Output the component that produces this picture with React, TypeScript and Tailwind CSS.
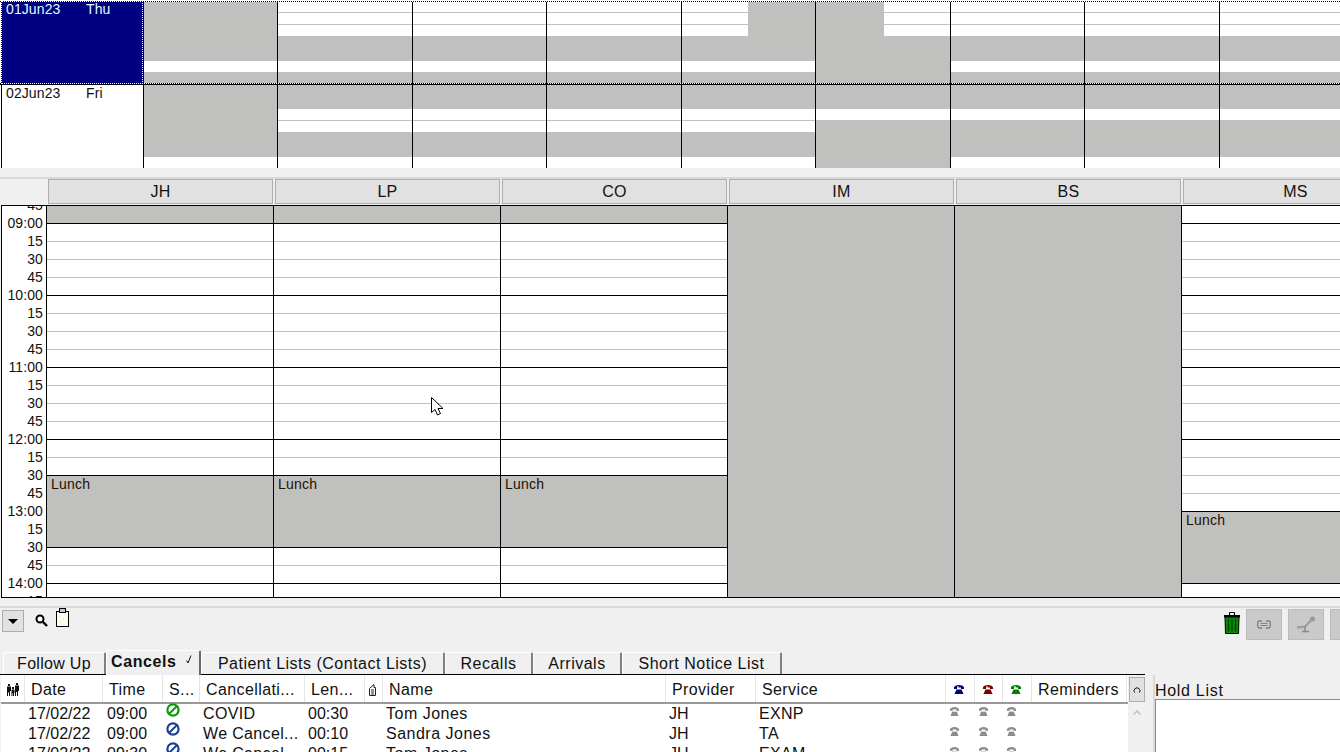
import React from 'react';

const GRAY = 'bg-[#c0c0be]';
const dayGrid =
  'grid grid-cols-[143px_134px_135px_134px_135px_134px_135px_134px_135px_121px]';

// top overview strip, one band = height + kind
type Band = [number, 'w' | 'l' | 'g'];

const openTop: Band[] = [
  [11, 'l'],
  [12, 'l'],
  [11, 'w'],
];

const Bands = ({ bands, className = '' }: { bands: Band[]; className?: string }) => (
  <div className={`flex flex-col ${className}`}>
    {bands.map(([h, kind], i) => (
      <div
        key={i}
        style={{ height: h }}
        className={kind === 'g' ? GRAY : kind === 'l' ? 'bg-white border-b border-[#c0c0c0]' : 'bg-white'}
      />
    ))}
  </div>
);

const DayCell = ({ bands, children }: { bands?: Band[]; children?: React.ReactNode }) => (
  <div className="border-l border-black overflow-hidden">
    {children}
    {bands && <Bands bands={bands} />}
  </div>
);

const thuAfter: Band[] = [
  [25, 'g'],
  [11, 'w'],
  [11, 'g'],
];

const ThuRow = () => (
  <div className={`${dayGrid} h-[83px] border-y border-dotted border-black`}>
    <div className="ml-px bg-[#000080] border border-dotted border-white text-[#dff] text-[14px] leading-[15px] tracking-[0.1px] flex pl-1 -mt-px h-[83px]">
      <span className="w-20">01Jun23</span>
      <span>Thu</span>
    </div>
    <DayCell bands={[[59, 'g'], [11, 'w'], [11, 'g']]} />
    <DayCell bands={[...openTop, ...thuAfter]} />
    <DayCell bands={[...openTop, ...thuAfter]} />
    <DayCell bands={[...openTop, ...thuAfter]} />
    <DayCell>
      <div className="flex">
        <Bands bands={openTop} className="flex-1" />
        <div className={`w-[67px] ${GRAY}`} />
      </div>
      <Bands bands={thuAfter} />
    </DayCell>
    <DayCell>
      <div className="flex">
        <div className={`w-[68px] ${GRAY}`} />
        <Bands bands={openTop} className="flex-1" />
      </div>
      <Bands bands={[[47, 'g']]} />
    </DayCell>
    <DayCell bands={[...openTop, ...thuAfter]} />
    <DayCell bands={[...openTop, ...thuAfter]} />
    <DayCell bands={[...openTop, ...thuAfter]} />
  </div>
);

const friOpen: Band[] = [
  [24, 'g'],
  [12, 'l'],
  [11, 'w'],
  [25, 'g'],
  [11, 'w'],
];
const friHalf: Band[] = [
  [24, 'g'],
  [11, 'w'],
  [37, 'g'],
  [11, 'w'],
];

const FriRow = () => (
  <div className={`${dayGrid} h-[84px] border-t border-black`}>
    <div className="ml-px border-l border-black bg-white text-[#111] text-[14px] leading-4 tracking-[0.1px] flex pl-1 h-[83px]">
      <span className="w-20">02Jun23</span>
      <span>Fri</span>
    </div>
    <DayCell bands={[[72, 'g'], [11, 'w']]} />
    <DayCell bands={friOpen} />
    <DayCell bands={friOpen} />
    <DayCell bands={friOpen} />
    <DayCell bands={friOpen} />
    <DayCell bands={[[24, 'g'], [11, 'w'], [48, 'g']]} />
    <DayCell bands={friHalf} />
    <DayCell bands={friHalf} />
    <DayCell bands={friHalf} />
  </div>
);

// main day grid
const timeLabels = [
  '45', '09:00', '15', '30', '45', '10:00', '15', '30', '45', '11:00', '15', '30', '45',
  '12:00', '15', '30', '45', '13:00', '15', '30', '45', '14:00', '15',
];

const ROW = 18;

const Provider = ({
  lunchFrom,
  lunchSlots,
  firstClosed,
  last,
}: {
  lunchFrom: number;
  lunchSlots: number;
  firstClosed?: boolean;
  last?: boolean;
}) => {
  const rows: React.ReactNode[] = [];
  let i = 0;
  while (i < 22) {
    if (i === lunchFrom) {
      rows.push(
        <div
          key={i}
          style={{ height: ROW * lunchSlots }}
          className={`${GRAY} border-b border-black pl-1 text-[14px] leading-4 tracking-[0.2px] text-[#210]`}
        >
          Lunch
        </div>
      );
      i += lunchSlots;
      continue;
    }
    const hard = i % 4 === 0 || i === lunchFrom - 1;
    rows.push(
      <div
        key={i}
        className={`h-[18px] border-b ${hard ? 'border-black' : 'border-[#c0c0c0]'} ${
          firstClosed && i === 0 ? GRAY : 'bg-white'
        }`}
      />
    );
    i += 1;
  }
  return <div className={`${last ? 'flex-1' : 'w-[227px] border-r border-black'} overflow-hidden`}>{rows}</div>;
};

const Closed = () => <div className={`w-[227px] border-r border-black ${GRAY}`} />;

const ColHead = ({ label }: { label: string }) => (
  <div className="w-[225px] shrink-0 h-[25px] bg-[#e1e1e1] border border-[#adadad] flex items-center justify-center text-[16px] tracking-[0.3px] text-[#111]">
    {label}
  </div>
);

// icons
const SearchIcon = () => (
  <svg width="13" height="13" viewBox="0 0 13 13" className="mt-[5px] ml-[11px]">
    <circle cx="5" cy="5" r="3.500" fill="#fff" stroke="#000" strokeWidth="2" />
    <path d="M8 8l4 4" stroke="#000" strokeWidth="2.400" />
  </svg>
);

const ClipboardIcon = () => (
  <svg width="14" height="19" viewBox="0 0 14 19" className="ml-[8px] -mt-px">
    <rect x="0.500" y="3.500" width="12" height="15" fill="#fffff0" stroke="#000" />
    <rect x="3.500" y="0.500" width="6" height="4" fill="#c8c8c8" stroke="#000" />
    <path d="M3 8h1M7 11h1M4 14h1M9 7h1M10 14h1" stroke="#d8d8a0" />
  </svg>
);

const TrashIcon = () => (
  <svg width="17" height="22" viewBox="0 0 17 22">
    <path d="M5.500 3V.5h5V3" fill="none" stroke="#000" />
    <rect x="0" y="3" width="16" height="2.500" fill="#000" />
    <path d="M1 5h14l-.5 16.500h-13z" fill="#078a07" stroke="#000" />
    <path d="M4.500 7.500v12M8 7.500v12M11.500 7.500v12" stroke="#013a01" strokeWidth="1.200" />
  </svg>
);

const LinkIcon = () => (
  <svg width="14" height="9" viewBox="0 0 14 9">
    <path d="M5 1H2.500Q.5 1 .5 4.500T2.500 8H5M9 1h2.500q2 0 2 3.500T11.500 8H9" fill="none" stroke="#808080" strokeWidth="1.300" />
    <path d="M3.500 3.500h7M3.500 5.500h7" stroke="#808080" />
  </svg>
);

const ChairIcon = () => (
  <svg width="20" height="17" viewBox="0 0 20 17">
    <path d="M1 11.500l8-1 6-6" fill="none" stroke="#9a9a9a" strokeWidth="2" />
    <circle cx="16.500" cy="3" r="2.500" fill="#9a9a9a" />
    <path d="M9 11v4M6 15.500h7" stroke="#7a8aa8" strokeWidth="1.500" />
    <path d="M2 13l5-1" stroke="#b8b8b8" />
  </svg>
);

const PhoneIcon = ({ color, hollow }: { color: string; hollow?: boolean }) => (
  <svg width={hollow ? 9 : 10} height="9" viewBox="0 0 10 9" preserveAspectRatio="none" className="block">
    <path d="M0 4V2.500C0 1 2.500 0 5 0s5 1 5 2.500V4H7V2.500H3V4z" fill={color} />
    <path d="M2.500 4.500h5L9.500 9H.5z" fill={color} />
    {!hollow && <path d="M3 1.500h2v1H3z" fill="#fff" />}
    {hollow && <path d="M1 4h8" stroke="#fff" strokeWidth="0.500" />}
  </svg>
);

const BanIcon = ({ color, top }: { color: string; top: string }) => (
  <svg width="14" height="14" viewBox="0 0 14 14" className={`ml-[-1px] ${top}`}>
    <circle cx="7" cy="7" r="5.600" fill="none" stroke={color} strokeWidth="2.200" />
    <path d="M3 11l8-8" stroke={color} strokeWidth="2" />
  </svg>
);

const FamilyIcon = () => (
  <svg width="14" height="13" viewBox="0 0 14 13">
    <path
      d="M2 1h2v2H2zM10 0h2v2h-2zM6 4h2v2H6zM1 3.500h4V8H4v5H3V9.500H2V13H1zM9 2.500h4V8h-1v5h-1V9H10v4H9zM5.500 6.500h3V10H8v3H7v-3h-.5v3h-1z"
      fill="#111"
    />
  </svg>
);

const NoteIcon = () => (
  <svg width="7" height="12" viewBox="0 0 7 12">
    <path d="M.5 4.500L5 .5v3h1.500v8h-6zM2 6h3M2 8h3M2 10h3" fill="none" stroke="#222" />
  </svg>
);

const Cursor = () => (
  <svg width="14" height="20" viewBox="0 0 14 20" className="absolute left-[431px] top-[397px]">
    <path d="M.5.500v15l3.500-3 2.500 5.500 3-1.500-2.500-5h5z" fill="#fff" stroke="#000" />
  </svg>
);

// bottom list
const listCols = 'grid grid-cols-[24px_78px_60px_37px_105px_60px_18px_283px_90px_190px_29px_28px_29px_95px]';

const heads: React.ReactNode[] = [
  <div className="pl-[5px]"><FamilyIcon /></div>,
  'Date',
  'Time',
  'S...',
  'Cancellati...',
  'Len...',
  <div className="pl-[4px]"><NoteIcon /></div>,
  'Name',
  'Provider',
  'Service',
  <div className="pl-2"><PhoneIcon color="#000080" /></div>,
  <div className="pl-2"><PhoneIcon color="#7a0000" /></div>,
  <div className="pl-2"><PhoneIcon color="#008000" /></div>,
  'Reminders',
];

const rows = [
  { date: '17/02/22', time: '09:00', ban: '#0a9a0a', top: 'mt-[-1px]', why: 'COVID', len: '00:30', name: 'Tom Jones', prov: 'JH', svc: 'EXNP' },
  { date: '17/02/22', time: '09:00', ban: '#1c3f94', top: 'mt-[-2px]', why: 'We Cancel...', len: '00:10', name: 'Sandra Jones', prov: 'JH', svc: 'TA' },
  { date: '17/02/22', time: '09:30', ban: '#1c3f94', top: 'mt-[-2px]', why: 'We Cancel...', len: '00:15', name: 'Tom Jones', prov: 'JH', svc: 'EXAM' },
];

const Tab = ({ label, w, active, check, track }: { label: string; w: string; active?: boolean; check?: boolean; track?: string }) => (
  <div
    className={
      active
        ? `${w} h-[25px] -mb-px bg-[#f0f0f0] border-l border-t border-white border-r-2 border-r-[#696969] rounded-t-[2px] pl-[4px] text-[16px] font-bold leading-[22px] tracking-[0.6px] text-[#111] relative`
        : `${w} h-[22px] bg-[#f0f0f0] border-l border-t border-white border-r-2 border-r-[#808080] rounded-t-[2px] text-[16px] leading-[22px] ${track ?? 'tracking-[0.5px]'} text-[#111] text-center`
    }
  >
    {label}
    {check && (
      <svg width="6" height="9" viewBox="0 0 6 9" className="absolute right-[7px] top-[4px]">
        <path d="M.5 5.500l1.500 2.500L5 .5" fill="none" stroke="#111" />
      </svg>
    )}
  </div>
);

const App: React.FC = () => {
  return (
    <div className="relative w-[1340px] h-[752px] overflow-hidden bg-[#f0f0f0] font-['Liberation_Sans',Arial,sans-serif]">
      {/* Week overview */}
      <div className="bg-white pt-px h-[168px] overflow-hidden">
        <ThuRow />
        <FriRow />
      </div>

      <div className="h-[11px] border-b-2 border-[#d9d9d9] mt-0 -mb-px" />

      {/* Provider headers */}
      <div className="flex gap-[2px] pl-[48px] mt-[1px]">
        <ColHead label="JH" />
        <ColHead label="LP" />
        <ColHead label="CO" />
        <ColHead label="IM" />
        <ColHead label="BS" />
        <ColHead label="MS" />
      </div>

      {/* Day grid */}
      <div className="ml-px mt-px h-[393px] flex border border-r-0 border-black overflow-hidden">
        <div className="w-[45px] shrink-0 border-r border-black bg-white overflow-hidden">
          <div className="-mt-[10px] text-[14px] tracking-[0.1px] text-[#111] text-right pr-[3px]">
            {timeLabels.map((t, i) => (
              <div key={i} className="h-[18px] leading-[18px]">
                {t}
              </div>
            ))}
          </div>
        </div>
        <Provider lunchFrom={15} lunchSlots={4} firstClosed />
        <Provider lunchFrom={15} lunchSlots={4} firstClosed />
        <Provider lunchFrom={15} lunchSlots={4} firstClosed />
        <Closed />
        <Closed />
        <Provider lunchFrom={17} lunchSlots={4} last />
      </div>

      {/* Toolbar */}
      <div className="mt-2 border-t-2 border-[#d9d9d9] h-[45px] flex pt-px">
        <div className="ml-[2px] mt-[1px] w-[22px] h-[22px] bg-[#e1e1e1] border border-[#adadad] flex items-center justify-center">
          <div className="w-0 h-0 border-x-[5px] border-x-transparent border-t-[5px] border-t-black" />
        </div>
        <SearchIcon />
        <ClipboardIcon />
        <div className="flex-1" />
        <div className="mt-[3px] mr-[5px]">
          <TrashIcon />
        </div>
        <div className="w-[36px] h-[31px] bg-[#cacaca] border border-[#bcbcbc] flex items-center justify-center">
          <LinkIcon />
        </div>
        <div className="ml-[6px] w-[36px] h-[31px] bg-[#cacaca] border border-[#bcbcbc] flex items-center justify-center">
          <ChairIcon />
        </div>
        <div className="ml-[6px] w-[36px] h-[31px] bg-[#cacaca] border border-[#bcbcbc] -mr-[26px]" />
      </div>

      {/* Tabs */}
      <div className="w-[1145px] h-[24px] pl-[3px] flex items-end border-b border-black">
        <Tab label="Follow Up" w="w-[103px]" track="tracking-[0.3px]" />
        <Tab label="Cancels" w="w-[95px]" active check />
        <Tab label="Patient Lists (Contact Lists)" w="w-[244px]" />
        <Tab label="Recalls" w="w-[88px]" />
        <Tab label="Arrivals" w="w-[89px]" />
        <Tab label="Short Notice List" w="w-[160px]" />
      </div>

      {/* Lists */}
      <div className="flex h-[77px] overflow-hidden">
        <div className="w-[1127px] ml-px shrink-0 overflow-hidden bg-white">
          <div className={`${listCols} h-[29px] border-b-2 border-[#9a9a9a]`}>
            {heads.map((h, i) => (
              <div
                key={i}
                className={`border-r border-[#e5e5e5] h-[27px] pt-[2px] flex items-center text-[16px] tracking-[0.4px] text-[#111] whitespace-nowrap overflow-hidden ${
                  typeof h === 'string' ? 'pl-[6px]' : ''
                }`}
              >
                {h}
              </div>
            ))}
          </div>
          <div className="border-l border-[#9a9a9a] -ml-px">
            {rows.map((r, i) => (
              <div key={i} className={`${listCols} h-5 text-[16px] leading-5 text-[#111] whitespace-nowrap`}>
                <div />
                <div className="pl-[3px]">{r.date}</div>
                <div className="pl-1">{r.time}</div>
                <div className="pl-1">
                  <BanIcon color={r.ban} top={r.top} />
                </div>
                <div className="pl-[3px] tracking-[0.35px]">{r.why}</div>
                <div className="pl-[3px]">{r.len}</div>
                <div />
                <div className="pl-[3px] tracking-[0.5px]">{r.name}</div>
                <div className="pl-[3px]">{r.prov}</div>
                <div className="pl-[3px] tracking-[0.3px]">{r.svc}</div>
                <div className="pl-1 pt-[3px]"><PhoneIcon color="#8c8c8c" hollow /></div>
                <div className="pl-1 pt-[3px]"><PhoneIcon color="#8c8c8c" hollow /></div>
                <div className="pl-1 pt-[3px]"><PhoneIcon color="#8c8c8c" hollow /></div>
                <div />
              </div>
            ))}
          </div>
        </div>

        {/* scroller */}
        <div className="w-[16px] ml-px pt-[2px] shrink-0 flex flex-col items-center">
          <div className="w-[16px] h-[25px] bg-[#e1e1e1] border border-[#adadad] flex items-center justify-center">
            <svg width="8" height="8" viewBox="0 0 8 8">
              <path d="M1.500 6.500A3 3 0 1 1 6.500 6.500" fill="none" stroke="#111" />
            </svg>
          </div>
          <svg width="8" height="5" viewBox="0 0 8 5" className="mt-[8px]">
            <path d="M.5 4.500L4 1l3.500 3.500" fill="none" stroke="#c0c0c0" strokeWidth="1.500" />
          </svg>
        </div>

        {/* hold list */}
        <div className="ml-2 flex-1 border-l-2 border-[#d9d9d9] flex flex-col">
          <div className="h-[24px] pt-[6px] text-[16px] leading-5 tracking-[0.7px] text-[#111]">Hold List</div>
          <div className="flex-1 bg-white border-l border-t border-[#8a8a8a]" />
        </div>
      </div>

      <Cursor />
    </div>
  );
};

export default App;
